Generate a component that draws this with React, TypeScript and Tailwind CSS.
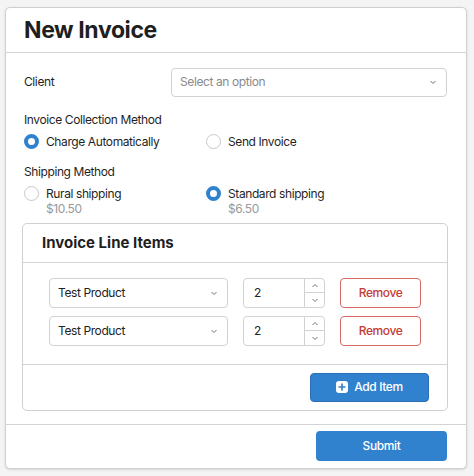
import { Plus } from "lucide-react";

function Chevron() {
  return (
    <svg width="8" height="6" viewBox="0 0 8 6" className="text-gray-500">
      <path d="M1.5 2l2.5 2.5L6.5 2" fill="none" stroke="currentColor" strokeWidth="1" />
    </svg>
  );
}

function Radio({ checked }: { checked: boolean }) {
  return checked ? (
    <span className="w-[15px] h-[15px] rounded-full border-[4px] border-[#3182ce] bg-white shrink-0" />
  ) : (
    <span className="w-[15px] h-[15px] rounded-full border border-[#c8c8c8] bg-white shrink-0" />
  );
}

function ProductRow() {
  return (
    <div className="flex items-center gap-[15px]">
      <div className="w-[179px] h-[30px] border border-[#d2d2d2] rounded-[4px] flex items-center justify-between pl-[8px] pr-[9px] text-[#222]">
        <span>Test Product</span>
        <Chevron />
      </div>
      <div className="w-[82px] h-[30px] border border-[#d2d2d2] rounded-[4px] flex text-[#222]">
        <div className="flex-1 flex items-center pl-[10px]">2</div>
        <div className="w-[20px] border-l border-[#d2d2d2] flex flex-col">
          <div className="flex-1 flex items-center justify-center border-b border-[#d2d2d2]">
            <svg width="8" height="5" viewBox="0 0 8 5" className="text-gray-500">
              <path d="M1.5 4l2.5-2.5L6.5 4" fill="none" stroke="currentColor" strokeWidth="1" />
            </svg>
          </div>
          <div className="flex-1 flex items-center justify-center">
            <svg width="8" height="5" viewBox="0 0 8 5" className="text-gray-500">
              <path d="M1.5 1l2.5 2.5L6.5 1" fill="none" stroke="currentColor" strokeWidth="1" />
            </svg>
          </div>
        </div>
      </div>
      <button className="w-[81px] h-[30px] border border-[#d66a66] rounded-[4px] font-medium text-[#c53b36]">
        Remove
      </button>
    </div>
  );
}

export default function App() {
  return (
    <div className="w-[474px] h-[476px] bg-[#f4f4f4] pl-[5px] pr-[7px] pt-[7px] font-['Inter',sans-serif] text-[12px] tracking-[-0.4px] text-[#1f1f1f]">
      <div className="h-[462px] bg-white border border-[#d0d0d0] rounded-[5px] shadow-sm flex flex-col">
        <div className="h-[47px] border-b border-[#d4d4d4] flex items-center pl-[18px]">
          <h1 className="text-[23px] font-bold tracking-[-0.4px]">New Invoice</h1>
        </div>

        <div className="flex-1 pl-[16px] pr-[19px] pt-[15px]">
          <div className="pl-[2px]">
            <div className="flex items-center">
              <span className="w-[147px]">Client</span>
              <div className="flex-1 h-[29px] border border-[#d2d2d2] rounded-[4px] flex items-center justify-between pl-[8px] pr-[9px] text-[#8a8a8a]">
                <span>Select an option</span>
                <Chevron />
              </div>
            </div>

            <div className="mt-[14px] leading-[18px]">Invoice Collection Method</div>
            <div className="mt-[4px] grid grid-cols-[182px_1fr]">
              <label className="flex items-center gap-[7px] h-[18px]">
                <Radio checked />
                <span>Charge Automatically</span>
              </label>
              <label className="flex items-center gap-[7px] h-[18px]">
                <Radio checked={false} />
                <span>Send Invoice</span>
              </label>
            </div>

            <div className="mt-[12px] leading-[18px]">Shipping Method</div>
            <div className="mt-[4px] grid grid-cols-[182px_1fr]">
              <div>
                <label className="flex items-center gap-[7px] h-[18px]">
                  <Radio checked={false} />
                  <span>Rural shipping</span>
                </label>
                <div className="-mt-[1px] pl-[22px] text-[#999] leading-[14px]">$10.50</div>
              </div>
              <div>
                <label className="flex items-center gap-[7px] h-[18px]">
                  <Radio checked />
                  <span>Standard shipping</span>
                </label>
                <div className="-mt-[1px] pl-[22px] text-[#999] leading-[14px]">$6.50</div>
              </div>
            </div>
          </div>

          <div className="mt-[7px] -mr-[1px] border border-[#d0d0d0] rounded-[5px]">
            <div className="h-[39px] border-b border-[#d4d4d4] flex items-center pl-[19px]">
              <h2 className="text-[15px] font-bold tracking-normal">Invoice Line Items</h2>
            </div>
            <div className="pt-[15px] pb-[18px] pl-[26px] flex flex-col gap-[8px]">
              <ProductRow />
              <ProductRow />
            </div>
            <div className="h-[46px] border-t border-[#d4d4d4] flex items-center justify-end pr-[18px]">
              <button className="w-[119px] h-[29px] rounded-[4px] bg-[#3182ce] border border-[#2a6fb3] text-white font-medium flex items-center justify-center gap-[6px]">
                <span className="w-[12px] h-[12px] bg-white rounded-[3px] flex items-center justify-center">
                  <Plus size={10} strokeWidth={4} className="text-[#3182ce]" />
                </span>
                Add Item
              </button>
            </div>
          </div>
        </div>

        <div className="h-[46px] mt-[13px] border-t border-[#d4d4d4] flex items-center justify-end pr-[19px]">
          <button className="w-[131px] h-[30px] rounded-[4px] bg-[#3182ce] text-white font-medium">
            Submit
          </button>
        </div>
      </div>
    </div>
  );
}
